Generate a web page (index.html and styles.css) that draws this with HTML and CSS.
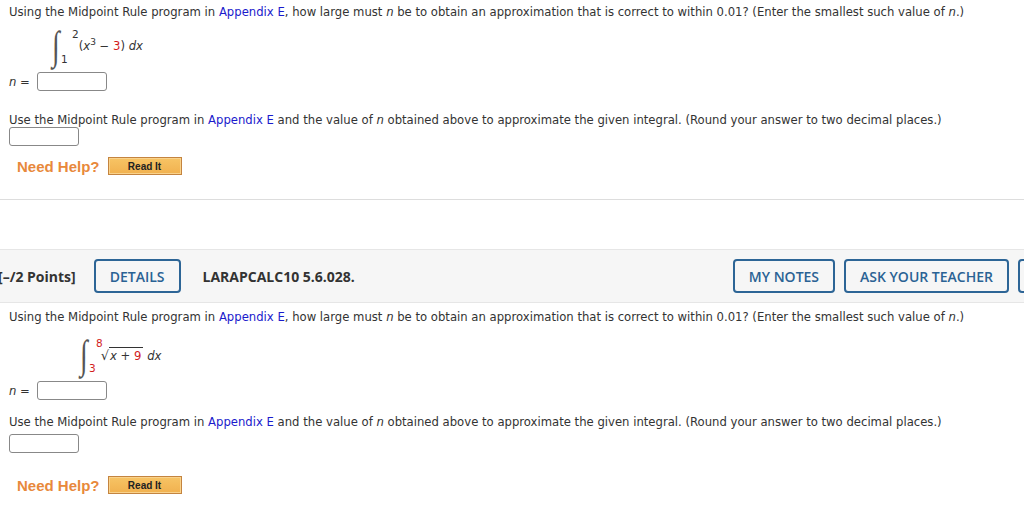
FILE: index.html
```html
<!DOCTYPE html>
<html>
<head>
<meta charset="utf-8">
<link rel="stylesheet" href="styles.css">
</head>
<body>
<div class="page">
  <section class="qbody first">
    <p class="line">Using the Midpoint Rule program in <a class="link">Appendix E</a>, how large must <i>n</i> be to obtain an approximation that is correct to within 0.01? (Enter the smallest such value of <i>n</i>.)</p>
    <div class="integral int1">
      <span class="isign">∫</span>
      <span class="limits"><span class="up">2</span><span class="lo">1</span></span>
      <span class="expr">(<i>x</i><sup>3</sup> − <span class="red">3</span>) <i>dx</i></span>
    </div>
    <div class="nrow"><span><i>n</i> =</span><span class="box"></span></div>
    <p class="line line2">Use the Midpoint Rule program in <a class="link">Appendix E</a> and the value of <i>n</i> obtained above to approximate the given integral. (Round your answer to two decimal places.)</p>
    <span class="box box2"></span>
    <div class="help"><span class="need">Need Help?</span><span class="readit">Read It</span></div>
  </section>
  <hr class="sep">
  <div class="qheader">
    <span class="points">[–/2 Points]</span>
    <span class="btn">DETAILS</span>
    <span class="code">LARAPCALC10 5.6.028.</span>
    <span class="spacer"></span>
    <span class="btn">MY NOTES</span>
    <span class="btn">ASK YOUR TEACHER</span>
    <span class="btn">PRACTICE ANOTHER</span>
  </div>
  <section class="qbody second">
    <p class="line">Using the Midpoint Rule program in <a class="link">Appendix E</a>, how large must <i>n</i> be to obtain an approximation that is correct to within 0.01? (Enter the smallest such value of <i>n</i>.)</p>
    <div class="integral int2">
      <span class="isign">∫</span>
      <span class="limits"><span class="up red">8</span><span class="lo red">3</span></span>
      <span class="expr"><span class="root">√</span><span class="radicand"><i>x</i> + <span class="red">9</span></span> <i>dx</i></span>
    </div>
    <div class="nrow"><span><i>n</i> =</span><span class="box"></span></div>
    <p class="line line2b">Use the Midpoint Rule program in <a class="link">Appendix E</a> and the value of <i>n</i> obtained above to approximate the given integral. (Round your answer to two decimal places.)</p>
    <span class="box box2 box2b"></span>
    <div class="help help2"><span class="need">Need Help?</span><span class="readit">Read It</span></div>
  </section>
</div>
</body>
</html>
```
FILE: styles.css
```css
html, body { margin: 0; padding: 0; background: #fff; overflow: hidden; }
body { font-family: "DejaVu Sans", Verdana, sans-serif; font-size: 11.65px; color: #333; }
.page { width: 1200px; }
.qbody { padding-left: 9px; }
.first { padding-top: 4px; }
.line { margin: 0; line-height: 16px; white-space: nowrap; }
.link { color: #1a1acc; text-decoration: none; }
.red { color: #d21c1c; }
i { font-style: italic; }
.integral { display: flex; align-items: center; height: 40px; }
.int1 { margin: 6px 0 0 43px; }
.isign { display: inline-block; width: 12px; font-family: "Liberation Serif", serif; font-size: 40px; line-height: 40px; color: #555; transform: scaleX(0.7); transform-origin: left center; }
.limits { display: flex; flex-direction: column; justify-content: space-between; height: 37px; font-size: 10.5px; line-height: 12px; }
.limits .up { padding-left: 8px; }
.limits .lo { margin-left: -3px; }
.expr { font-size: 11.65px; white-space: nowrap; }
sup { font-size: 9px; vertical-align: 5px; line-height: 0; }
.nrow { display: flex; align-items: center; gap: 7px; margin-top: 6px; }
.box { display: inline-block; width: 68px; height: 17px; border: 1px solid #888; border-radius: 3px; background: #fff; }
.line2 { margin-top: 21px; }
.box2 { display: block; margin-top: -1px; }
.help { display: flex; align-items: center; gap: 8px; margin-top: 10px; padding-left: 8px; height: 20px; }
.need { font-family: "Liberation Sans", Arial, sans-serif; font-weight: bold; font-size: 15px; color: #e8893b; }
.readit { display: inline-flex; align-items: center; justify-content: center; width: 70px; height: 14px; border: 1px solid #c4843f; box-shadow: inset 0 0 0 1px #f9d28b; background: linear-gradient(#f7c465, #f1b14f); font-family: "Liberation Sans", Arial, sans-serif; font-weight: bold; font-size: 10px; color: #222; padding: 1px; }
.sep { border: 0; border-top: 1px solid #ddd; margin: 23px 0 0; }
.qheader { margin-top: 49px; height: 52px; background: #f6f6f6; border-top: 1px solid #e6e6e6; border-bottom: 1px solid #e6e6e6; display: flex; align-items: center; font-family: "Open Sans", sans-serif; font-size: 14px; margin-left: -2px; white-space: nowrap; }
.points { font-weight: bold; color: #333; margin-right: 18px; flex-shrink: 0; }
.code { font-weight: bold; color: #333; margin-left: 13px; flex-shrink: 0; }
.spacer { width: 378px; flex-shrink: 0; }
.btn { flex-shrink: 0; display: inline-flex; align-items: center; justify-content: center; height: 30px; padding: 0 14px; border: 2px solid #2d6596; border-radius: 4px; color: #2a6294; font-weight: 600; margin-right: 9px; }
.second { padding-top: 6px; }
.int2 { margin: 10px 0 0 71px; }
.int2 .limits .up { padding-left: 4px; }
.root { font-size: 13px; margin-left: -2px; }
.radicand { border-top: 1px solid #333; padding: 1px 2px 0 1px; line-height: 14px; }
.line2b { margin-top: 14px; }
.box2b { margin-top: 4px; }
.help2 { margin-top: 22px; }
```
